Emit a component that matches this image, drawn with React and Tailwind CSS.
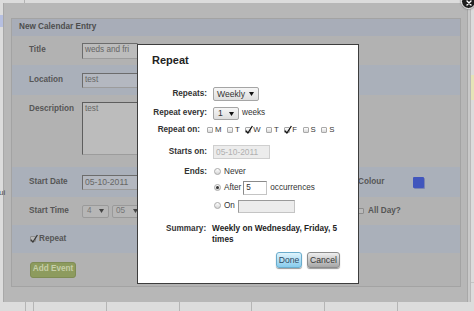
import React from 'react';

function Box({ checked, dim }) {
  return (
    <span
      className={`relative inline-block shrink-0 w-[6px] h-[6px] rounded-[1px] border ${
        dim ? 'border-[#8c8c8c] bg-[#b9b9b9]' : 'border-[#a9a9a9] bg-gradient-to-b from-white to-[#d9d9d9]'
      }`}
    >
      {checked && (
        <svg className="absolute -left-[1px] -top-[3px] w-[8px] h-[9px]" viewBox="0 0 8 9">
          <path d="M0.8 5.6 L2.9 8 L7.4 1" fill="none" stroke={dim ? '#3a3a3a' : '#111'} strokeWidth="1.3" />
        </svg>
      )}
    </span>
  );
}

function Radio({ checked }) {
  return (
    <span className="inline-flex shrink-0 items-center justify-center w-[7px] h-[7px] rounded-full border border-[#a9a9a9] bg-gradient-to-b from-white to-[#d6d6d6]">
      {checked && <span className="w-[3px] h-[3px] rounded-full bg-[#333]" />}
    </span>
  );
}

function Arrow({ color = '#111' }) {
  return (
    <svg className="w-[5px] h-[4px]" viewBox="0 0 5 4">
      <path d="M0 0 H5 L2.5 4 Z" fill={color} />
    </svg>
  );
}

function Row({ label, children, className = '' }) {
  return (
    <div className={`flex items-center pl-[14px] ${className}`}>
      <span className="w-[55px] text-right font-bold">{label}</span>
      <div className="ml-[6px] flex items-center">{children}</div>
    </div>
  );
}

const days = [
  ['M', false],
  ['T', false],
  ['W', true],
  ['T', false],
  ['F', true],
  ['S', false],
  ['S', false],
];

export default function App() {
  return (
    <div className="relative w-[474px] h-[311px] overflow-hidden bg-[#dcdcdc] font-['Liberation_Sans',Arial,sans-serif] text-[8.2px] leading-none">
      {/* page strip above the lightbox */}
      <div className="flex h-[3px]">
        <div className="w-[25px] border-r border-[#b3b3b3]" />
      </div>

      <div className="flex h-[299px]">
        {/* left strip */}
        <div className="w-[3px] flex flex-col">
          <div className="h-[12px]" />
          <div className="h-[12px] bg-[#b6bfe0]" />
        </div>

        {/* lightbox */}
        <div className="w-[465px] bg-[#b7b7b7] border-x border-[#a8a8a8] pl-[7px] pt-[15px]">
          <div className="w-[450px] h-[269px] border border-[#a3a3a3] flex flex-col text-[#565656]">
            <div className="h-[17px] bg-[#a8adb8] flex items-center pl-[7px] font-bold text-[#4d4d4d]">
              New Calendar Entry
            </div>

            <div className="h-[29px] bg-[#b2b2b2] flex items-center pl-[17px]">
              <span className="w-[53px] font-bold">Title</span>
              <div className="w-[56px] h-[16px] bg-[#bcbcbc] border border-[#9c9c9c] border-t-[#6c6c6c] border-l-[#6c6c6c] flex items-center pl-[2px] text-[#666] whitespace-nowrap overflow-hidden">
                weds and fri
              </div>
            </div>

            <div className="h-[30px] bg-[#aab0ba] flex items-center pl-[17px]">
              <span className="w-[53px] font-bold">Location</span>
              <div className="w-[56px] h-[15px] bg-[#b4b8c0] border border-[#9c9c9c] border-t-[#6c6c6c] border-l-[#6c6c6c] flex items-center pl-[2px] text-[#666]">
                test
              </div>
            </div>

            <div className="h-[72px] bg-[#b2b2b2] flex items-start pl-[17px] pt-[7px]">
              <span className="w-[53px] h-[14px] flex items-center font-bold">Description</span>
              <div className="w-[56px] h-[53px] bg-[#bcbcbc] border border-[#9c9c9c] border-t-[#5e5e5e] border-l-[#5e5e5e] pl-[2px] pt-[2px] text-[#666]">
                test
              </div>
            </div>

            <div className="h-[30px] bg-[#aab0ba] flex items-center pl-[17px]">
              <span className="w-[53px] font-bold">Start Date</span>
              <div className="w-[276px]">
                <div className="w-[60px] h-[15px] bg-[#b4b8c0] border border-[#9c9c9c] border-t-[#6c6c6c] border-l-[#6c6c6c] flex items-center pl-[2px] text-[#666] text-[8.6px]">
                  05-10-2011
                </div>
              </div>
              <span className="w-[55px] font-bold">Colour</span>
              <span className="w-[11px] h-[11px] rounded-[1px] bg-[#4156bd] shadow-[1px_1px_0_#7d86b0]" />
            </div>

            <div className="h-[28px] bg-[#b2b2b2] flex items-center pl-[17px]">
              <span className="w-[53px] font-bold">Start Time</span>
              <div className="w-[276px] flex items-center gap-[3px]">
                <div className="w-[27px] h-[13px] rounded-[2px] border border-[#9a9a9a] bg-[#b6b6b6] flex items-center justify-between px-[4px] text-[#777]">
                  4 <Arrow color="#444" />
                </div>
                <div className="w-[30px] h-[13px] rounded-[2px] border border-[#9a9a9a] bg-[#b6b6b6] flex items-center justify-between px-[3px] text-[#777]">
                  05 <Arrow color="#444" />
                </div>
              </div>
              <span className="flex items-center gap-[4px] font-bold">
                <Box dim />
                All Day?
              </span>
            </div>

            <div className="h-[28px] bg-[#aab0ba] flex items-center pl-[18px]">
              <span className="flex items-center gap-[3px] font-bold">
                <Box dim checked />
                Repeat
              </span>
            </div>

            <div className="flex-1 bg-[#b2b2b2] flex items-center pl-[18px]">
              <div className="w-[46px] h-[16px] rounded-[3px] border border-[#7f8c55] bg-[#8d9b5e] flex items-center justify-center font-bold text-[#c6cea8]">
                Add Event
              </div>
            </div>
          </div>
        </div>

        {/* right strip */}
        <div className="flex-1 flex">
          <div className="w-[2px] bg-[#c9c9c9]" />
          <div className="flex-1 border-l border-[#b9b9b9] flex flex-col">
            <div className="h-[72px]" />
            <div className="h-[25px] bg-[#e6e4b8]" />
            <div className="h-[183px] border-b border-[#c4c4c4]" />
          </div>
        </div>
      </div>

      {/* calendar grid below */}
      <div className="flex h-[9px]">
        <div className="w-[25px]" />
        <div className="w-[8px] border-l border-[#b5b5b5]" />
        <div className="w-[73px] border-l border-[#b5b5b5]" />
        <div className="w-[73px] border-l border-[#b5b5b5]" />
        <div className="w-[72px] border-l border-[#b5b5b5]" />
        <div className="w-[73px] border-l border-[#b5b5b5]" />
        <div className="w-[73px] border-l border-[#b5b5b5]" />
        <div className="flex-1 border-l border-[#b5b5b5]" />
      </div>

      <span className="absolute left-[-1px] top-[189px] text-[#4a4a4a] text-[8px]">ui</span>

      {/* close button */}
      <div className="absolute left-[461px] top-[-6px] w-[15px] h-[15px] rounded-full bg-[#1c1c1c] border-[1.5px] border-white shadow-[0_0_2px_#555] flex items-end justify-center pb-[2px]">
        <svg className="w-[6px] h-[6px]" viewBox="0 0 6 6">
          <path d="M1 1 L5 5 M5 1 L1 5" stroke="#fff" strokeWidth="1.4" strokeLinecap="round" />
        </svg>
      </div>

      {/* Repeat dialog */}
      <div className="absolute left-[137px] top-[44px] w-[222px] h-[240px] border border-[#3d3d3d] bg-white pr-[18px] text-[#333]">
        <div className="pl-[14px] pt-[8px] h-[22px] flex items-center text-[11px] font-bold text-[#222]">Repeat</div>

        <div className="mt-[17px] flex flex-col">
          <Row label="Repeats:" className="h-[20px]">
            <div className="w-[46px] h-[14px] rounded-[2px] border border-[#a5a5a5] bg-gradient-to-b from-[#f6f6f6] to-[#dedede] flex items-center justify-between pl-[3px] pr-[4px] text-[8.6px]">
              Weekly <Arrow />
            </div>
          </Row>
          <Row label="Repeat every:" className="h-[19px]">
            <div className="w-[26px] h-[13px] rounded-[2px] border border-[#a5a5a5] bg-gradient-to-b from-[#f6f6f6] to-[#dedede] flex items-center justify-between pl-[4px] pr-[4px] text-[8.6px]">
              1 <Arrow />
            </div>
            <span className="ml-[3px]">weeks</span>
          </Row>
          <Row label="Repeat on:" className="h-[14px]">
            <div className="flex items-center ml-[1px]">
              {days.map(([d, c], i) => (
                <span key={i} className="flex items-center mr-[5.5px]">
                  <Box checked={c} />
                  <span className="ml-[2px] text-[7.8px]">{d}</span>
                </span>
              ))}
            </div>
          </Row>
          <Row label="Starts on:" className="h-[30px]">
            <div className="w-[57px] h-[14px] border border-[#cfcfcf] bg-[#ececec] flex items-center pl-[2px] text-[#b0b0b0] text-[8.4px]">
              05-10-2011
            </div>
          </Row>
          <Row label="Ends:" className="h-[10px]">
            <span className="flex items-center gap-[3px] ml-[1px]">
              <Radio />
              Never
            </span>
          </Row>
          <Row label="" className="h-[22px]">
            <span className="flex items-center gap-[3px] ml-[1px]">
              <Radio checked />
              After
            </span>
            <div className="ml-[2px] w-[24px] h-[14px] border border-[#c4c4c4] border-t-[#8a8a8a] border-l-[#8a8a8a] flex items-center pl-[2px]">5</div>
            <span className="ml-[3px]">occurrences</span>
          </Row>
          <Row label="" className="h-[14px]">
            <span className="flex items-center gap-[3px] ml-[1px]">
              <Radio />
              On
            </span>
            <div className="ml-[3px] w-[57px] h-[13px] border border-[#c4c4c4] border-t-[#9a9a9a] border-l-[#9a9a9a] bg-[#ececec]" />
          </Row>

          <div className="mt-[10px] flex items-start pl-[14px] leading-[11px]">
            <span className="w-[55px] text-right font-bold">Summary:</span>
            <span className="ml-[6px] w-[130px] font-bold text-[#222]">Weekly on Wednesday, Friday, 5 times</span>
          </div>

          <div className="mt-[7px] flex justify-end gap-[5px]">
            <div className="w-[26px] h-[16px] rounded-[3px] border border-[#6aaccc] bg-gradient-to-b from-[#dff4fd] to-[#86cbec] shadow-[0_1px_1px_#999] flex items-center justify-center text-[#2d4860] text-[8.6px]">
              Done
            </div>
            <div className="w-[33px] h-[16px] rounded-[3px] border border-[#8c8c8c] bg-gradient-to-b from-[#efefef] to-[#a6a6a6] shadow-[0_1px_1px_#999] flex items-center justify-center text-[#333] text-[8.6px]">
              Cancel
            </div>
          </div>
        </div>
      </div>
    </div>
  );
}
